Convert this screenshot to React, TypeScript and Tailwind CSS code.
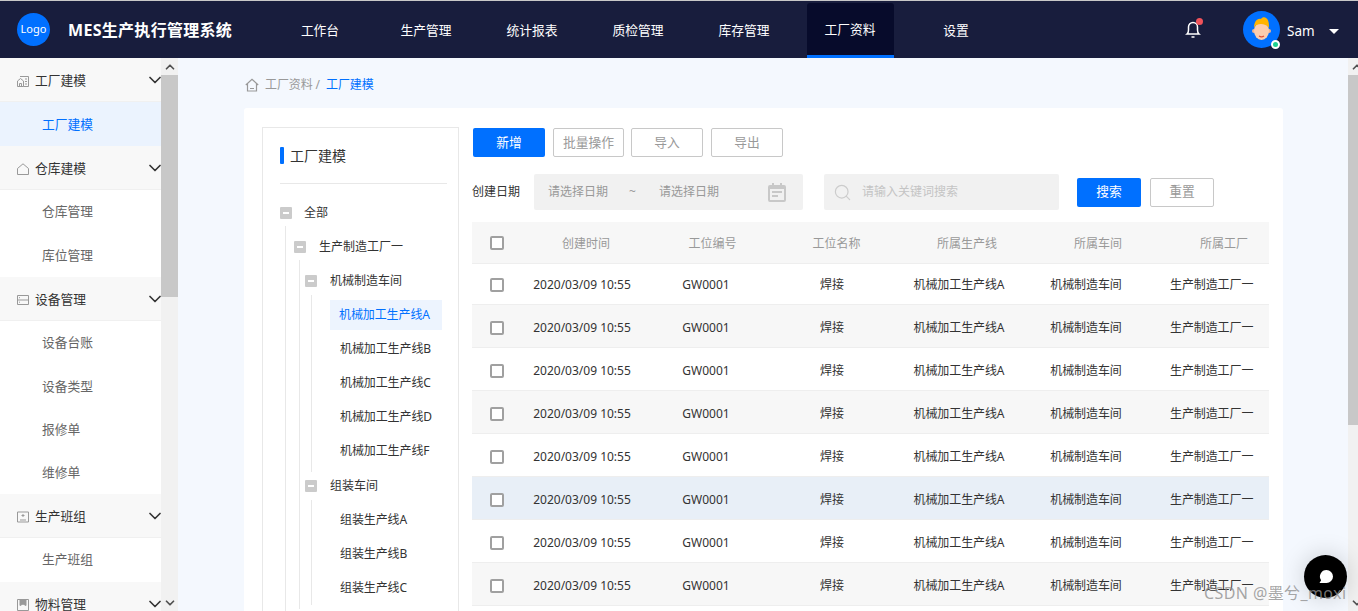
import { ReactNode } from "react";
import { ChevronDown, ChevronUp, Search } from "lucide-react";

const navItems = ["工作台", "生产管理", "统计报表", "质检管理", "库存管理", "工厂资料", "设置"];

const menu = [
  { title: "工厂建模", icon: "factory", items: ["工厂建模"] },
  { title: "仓库建模", icon: "house", items: ["仓库管理", "库位管理"] },
  { title: "设备管理", icon: "server", items: ["设备台账", "设备类型", "报修单", "维修单"] },
  { title: "生产班组", icon: "team", items: ["生产班组"] },
  { title: "物料管理", icon: "book", items: [] as string[] },
];

function MenuIcon({ name }: { name: string }) {
  return (
    <svg viewBox="0 0 12 12" className="h-3 w-3 shrink-0" fill="none" stroke="#999" strokeWidth="1">
      {name === "factory" && <path d="M.5 11.500V6L3.500 3.500l3 2.500v5.500zM3 1.500h8.500v10H6.500M8 4h2M8 6.500h2M8 9h2M2.500 11.500V8.500h2v3" />}
      {name === "house" && <path d="M.5 5.500 6 .8l5.500 4.700v6H.5z" />}
      {name === "server" && <path d="M.5 1.500h11v9H.5zM.5 6h11M2 3.700h1M2 8.200h1" />}
      {name === "team" && <path d="M.5 1h11v10H.5zM3 9h6M6 3v3M4.500 4.500h3" />}
      {name === "book" && (
        <>
          <path d="M.5.5h11v11H.5z" />
          <path d="M3 .5h6v6L6 5 3 6.500z" fill="#999" />
        </>
      )}
    </svg>
  );
}

function Sidebar() {
  return (
    <aside className="flex w-[178px] shrink-0 overflow-hidden bg-white">
      <div className="w-[161px] shrink-0 overflow-hidden">
        {menu.map((group) => (
          <div key={group.title}>
            <div className="flex h-[44px] items-center border-b border-[#f0f0f0] bg-[#f8f8f8] pt-[2px] pl-[17px] text-[12.75px] text-[#333]">
              <MenuIcon name={group.icon} />
              <span className="ml-[6px] flex-1">{group.title}</span>
              <ChevronDown size={20} strokeWidth={2} className="-mr-[4px] -mt-[2px] shrink-0 text-[#333]" />
            </div>
            {group.items.map((item, i) => (
              <div
                key={item}
                className={
                  group.title === "工厂建模"
                    ? "flex h-[44px] items-center bg-[#ebf3fe] pt-[1px] pl-[42px] text-[12.75px] text-[#0070ff]"
                    : i === 0
                      ? "flex h-[44px] items-center pl-[42px] text-[12.75px] text-[#666]"
                      : "flex h-[43px] items-center pl-[42px] text-[12.75px] text-[#666]"
                }
              >
                {item}
              </div>
            ))}
          </div>
        ))}
      </div>
      <Scrollbar thumb="h-[222px]" width="w-[17px]" />
    </aside>
  );
}

// the window cuts the page scrollbar off at 10px, so the arrows stay 17px wide
function Scrollbar({ thumb, width }: { thumb: string; width: string }) {
  return (
    <div className={`flex ${width} shrink-0 flex-col overflow-hidden bg-[#f1f1f1] text-[#505050]`}>
      <div className="flex h-[17px] w-[17px] shrink-0 items-center justify-center">
        <ChevronUp size={14} strokeWidth={3} />
      </div>
      <div className={`${thumb} w-full shrink-0 bg-[#c8c8c8]`} />
      <div className="flex-1" />
      <div className="flex h-[17px] w-[17px] shrink-0 items-center justify-center">
        <ChevronDown size={14} strokeWidth={3} />
      </div>
    </div>
  );
}

function Box() {
  return (
    <span className="flex h-3 w-3 shrink-0 items-center justify-center rounded-[1px] bg-[#cbcbcb]">
      <span className="h-[2px] w-[6px] bg-white" />
    </span>
  );
}

function TreeRow({ gap, label, className = "" }: { gap: string; label: string; className?: string }) {
  return (
    <div className={`flex h-[34px] items-center text-[12px] text-[#333] ${className}`}>
      <Box />
      <span className={gap}>{label}</span>
    </div>
  );
}

function Leaf({ label, active }: { label: string; active?: boolean }) {
  if (active) {
    return (
      <div className="my-[2px] ml-[18px] flex h-[30px] w-[112px] items-center bg-[#edf4fe] pl-[9px] text-[12px] tracking-[-0.1px] text-[#0070ff]">
        {label}
      </div>
    );
  }
  return (
    <div className="ml-[18px] flex h-[34px] items-center pl-[10px] text-[12px] tracking-[-0.1px] text-[#333]">{label}</div>
  );
}

function Tree() {
  return (
    <div className="w-[197px] shrink-0 border border-[#e8e8e8] pr-[11px] pl-[17px]">
      <div className="flex h-[56px] items-center border-b border-[#e8e8e8]">
        <span className="h-[17px] w-[4px] rounded-[1px] bg-[#0070ff]" />
        <span className="ml-[6px] text-[14px] text-[#333]">工厂建模</span>
      </div>
      <div className="pt-[12px]">
        <TreeRow gap="ml-[12px]" label="全部" />
        <div className="-mt-[4px] ml-[5px] min-h-[500px] border-l border-[#e8e8e8] pt-[4px] pl-[8px]">
          <TreeRow gap="ml-[13px]" label="生产制造工厂一" />
          <div className="-mt-[4px] ml-[5px] border-l border-[#e8e8e8] pt-[4px] pb-[4px] pl-[5px]">
            <TreeRow gap="ml-[13px]" label="机械制造车间" />
            <div className="-mt-[3px] ml-[6px] border-l border-[#e8e8e8] pt-[3px] pb-[4px]">
              <Leaf label="机械加工生产线A" active />
              <Leaf label="机械加工生产线B" />
              <Leaf label="机械加工生产线C" />
              <Leaf label="机械加工生产线D" />
              <Leaf label="机械加工生产线F" />
            </div>
            <TreeRow gap="ml-[13px]" label="组装车间" className="-mt-[3px]" />
            <div className="-mt-[3px] ml-[6px] border-l border-[#e8e8e8] pt-[3px]">
              <Leaf label="组装生产线A" />
              <Leaf label="组装生产线B" />
              <Leaf label="组装生产线C" />
            </div>
          </div>
        </div>
      </div>
    </div>
  );
}

function OutlineButton({ children, width }: { children: ReactNode; width: string }) {
  return (
    <button className={`flex h-[29px] ${width} items-center justify-center rounded-[2px] border border-[#c8c8c8] bg-white text-[12.75px] text-[#999]`}>
      {children}
    </button>
  );
}

function CheckBox() {
  return <span className="block h-[14px] w-[14px] rounded-[2px] border-2 border-[#a0a0a0] bg-white" />;
}

const heads = [
  ["创建时间", "w-[128px] text-center"],
  ["工位编号", "w-[125px] text-center"],
  ["工位名称", "w-[123px] text-center"],
  ["所属生产线", "w-[138px] text-center"],
  ["所属车间", "w-[124px] text-center"],
  ["所属工厂", "w-[109px] pl-[40px]"],
];

const cells = [
  ["2020/03/09 10:55", "w-[120px] text-center"],
  ["GW0001", "w-[128px] text-center"],
  ["焊接", "w-[124px] text-center"],
  ["机械加工生产线A", "w-[130px] text-center tracking-[-0.1px]"],
  ["机械制造车间", "w-[124px] text-center tracking-[-0.1px]"],
  ["生产制造工厂一", "w-[121px] pl-[22px] tracking-[-0.1px]"],
];

function rowClass(r: number) {
  if (r === 0) return "flex h-[41px] items-center border-b border-[#eee] bg-white pt-[2px] text-[#333]";
  if (r === 5) return "flex h-[43px] items-center border-b border-[#eee] bg-[#e8eff7] pt-[4px] text-[#333]";
  if (r % 2 === 1) return "flex h-[43px] items-center border-b border-[#eee] bg-[#f7f7f7] pt-[4px] text-[#333]";
  return "flex h-[43px] items-center border-b border-[#eee] bg-white pt-[4px] text-[#333]";
}

function Table() {
  const rows = [0, 1, 2, 3, 4, 5, 6, 7];
  return (
    <div className="mt-[12px] w-[797px] text-[12px]">
      <div className="flex h-[42px] items-center border-b border-[#eee] bg-[#f7f7f7] text-[#999]">
        <div className="flex w-[50px] justify-center">
          <CheckBox />
        </div>
        {heads.map(([label, cls]) => (
          <div key={label} className={`${cls} whitespace-nowrap pt-[2px]`}>
            {label}
          </div>
        ))}
      </div>
      {rows.map((r) => (
        <div key={r} className={rowClass(r)}>
          <div className="flex w-[50px] justify-center">
            <CheckBox />
          </div>
          {cells.map(([label, cls]) => (
            <div key={label} className={`${cls} whitespace-nowrap`}>
              {label}
            </div>
          ))}
        </div>
      ))}
    </div>
  );
}

function Filters() {
  return (
    <div className="mt-[17px] flex h-[36px] items-center text-[12px]">
      <span className="w-[62px] text-[#333]">创建日期</span>
      <div className="flex h-[36px] w-[269px] items-center rounded-[2px] bg-[#f1f1f1] pl-[14px] text-[#999]">
        <span>请选择日期</span>
        <span className="ml-[21px]">~</span>
        <span className="ml-[23px]">请选择日期</span>
        <svg viewBox="0 0 18 19" className="ml-[49px] h-[19px] w-[18px]">
          <path d="M4 0h2v2h6V0h2v2h2a2 2 0 0 1 2 2v13a2 2 0 0 1-2 2H2a2 2 0 0 1-2-2V4a2 2 0 0 1 2-2h2z" fill="#c8c8c8" />
          <path d="M2 6h14v11H2z" fill="#f1f1f1" />
          <path d="M4 8h10v2H4zM4 12h6v2H4z" fill="#c8c8c8" />
        </svg>
      </div>
      <div className="ml-[21px] flex h-[36px] w-[235px] items-center rounded-[2px] bg-[#f1f1f1] pl-[9px] text-[#c4c4c4]">
        <Search size={19} strokeWidth={1.5} className="text-[#ccc]" />
        <span className="ml-[10px]">请输入关键词搜索</span>
      </div>
      <button className="ml-[18px] h-[29px] w-[64px] rounded-[2px] bg-[#0070ff] text-[12.75px] text-white">搜索</button>
      <button className="ml-[9px] h-[29px] w-[64px] rounded-[2px] border border-[#c8c8c8] bg-white text-[12.75px] text-[#999]">
        重置
      </button>
    </div>
  );
}

function Main() {
  return (
    <main className="flex-1 overflow-hidden bg-[#f4f8fe] pr-[65px] pl-[66px]">
      <div className="flex h-[50px] items-center pt-[4px] text-[12px] tracking-[-0.1px]">
        <svg viewBox="0 0 14 14" className="ml-[1px] h-[14px] w-[14px]" fill="none" stroke="#999" strokeWidth="1.200">
          <path d="M.8 7 7 1.200 13.200 7M2.500 6v7h9V6M5 10.500h4" />
        </svg>
        <span className="ml-[6px] text-[#999]">工厂资料 /</span>
        <span className="ml-[6px] text-[#0070ff]">工厂建模</span>
      </div>
      <div className="flex min-h-[600px] rounded-[3px] bg-white pt-[19px] pl-[18px]">
        <Tree />
        <div className="ml-[13px] pt-[1px]">
          <div className="flex pl-[1px]">
            <button className="flex h-[29px] w-[72px] items-center justify-center rounded-[2px] bg-[#0070ff] text-[12.75px] text-white">
              新增
            </button>
            <div className="ml-[8px]">
              <OutlineButton width="w-[71px]">批量操作</OutlineButton>
            </div>
            <div className="ml-[7px]">
              <OutlineButton width="w-[72px]">导入</OutlineButton>
            </div>
            <div className="ml-[8px]">
              <OutlineButton width="w-[72px]">导出</OutlineButton>
            </div>
          </div>
          <Filters />
          <Table />
        </div>
      </div>
    </main>
  );
}

function Header() {
  return (
    <header className="flex h-[58px] shrink-0 items-center border-t border-[#c8c8c8] bg-[#181d3d] text-white">
      <div className="ml-[17px] flex h-[33px] w-[33px] items-center justify-center rounded-full bg-[#0070ff] text-[11px]">
        Logo
      </div>
      <div className="ml-[18px] w-[199px] whitespace-nowrap text-[16px] font-bold tracking-[0.3px]">MES生产执行管理系统</div>
      <nav className="flex h-full text-[12.75px]">
        {navItems.map((item) => (
          <div key={item} className="flex h-full w-[106px] justify-center">
            {item === "工厂资料" ? (
              <div className="mt-[2px] flex w-[87px] items-center justify-center rounded-t-[3px] border-b-[3px] border-[#0070ff] bg-[#070b2b] pt-[2px]">
                {item}
              </div>
            ) : (
              <div className="flex items-center pt-[2px]">{item}</div>
            )}
          </div>
        ))}
      </nav>
      <div className="relative ml-[176px] -mt-[2px] h-[20px] w-[16px]">
        <svg viewBox="0 0 16 20" className="h-[20px] w-[16px]" fill="none" stroke="#fff" strokeWidth="1.500">
          <path d="M2 15c1.200-1 1.500-2 1.500-4V8a4.500 4.500 0 0 1 9 0v3c0 2 .3 3 1.500 4zM6.500 18h3" />
        </svg>
        <span className="absolute -top-[1px] right-[-2px] h-[7px] w-[7px] rounded-full bg-[#f0525a]" />
      </div>
      <div className="relative ml-[42px] h-[37px] w-[37px] shrink-0 rounded-full bg-[#0070ff]">
        <svg viewBox="0 0 37 37" className="h-[37px] w-[37px]">
          <circle cx="11" cy="20" r="2" fill="#f2b48f" />
          <circle cx="26" cy="20" r="2" fill="#f2b48f" />
          <ellipse cx="18.500" cy="20" rx="7.500" ry="9" fill="#fbcdae" />
          <path d="M11 17c0-6 3-10 7-9 1-2 4-2 5-1 3 2 3 6 3 10-2-3-5-4-8-4-3 0-6 1-7 4z" fill="#ffb400" />
          <path d="M16 25c1.500 1 3.500 1 5 0" stroke="#e0523a" strokeWidth="1.200" fill="none" />
        </svg>
        <span className="absolute right-0 bottom-[-1px] h-[9px] w-[9px] rounded-full border-2 border-white bg-[#1dd08f]" />
      </div>
      <span className="ml-[7px] pt-[3px] text-[13.5px]">Sam</span>
      <span className="mt-[3px] ml-[14px] h-0 w-0 border-x-[5px] border-t-[5px] border-x-transparent border-t-white" />
    </header>
  );
}

export default function App() {
  return (
    <div className="relative flex h-[611px] flex-col overflow-hidden font-['Noto_Sans','Noto_Sans_CJK_SC',sans-serif]">
      <Header />
      <div className="flex min-h-0 flex-1">
        <Sidebar />
        <Main />
        <Scrollbar thumb="h-[350px]" width="w-[10px]" />
      </div>
      <button className="absolute top-[555px] left-[1304px] flex h-[43px] w-[43px] items-center justify-center rounded-full bg-black shadow-[0_0_24px_rgba(0,0,0,0.18)]">
        <svg viewBox="0 0 16 16" className="h-[16px] w-[16px]" fill="#fff">
          <path d="M8.500 1a6.500 6.500 0 0 1 0 13H1.500l1.600-2.800A6.500 6.500 0 0 1 8.500 1z" />
        </svg>
      </button>
      <span className="absolute top-[581px] left-[1204px] text-[16px] tracking-[0.4px] text-[#8f8f8f]/80">CSDN @墨兮_moxi</span>
    </div>
  );
}
